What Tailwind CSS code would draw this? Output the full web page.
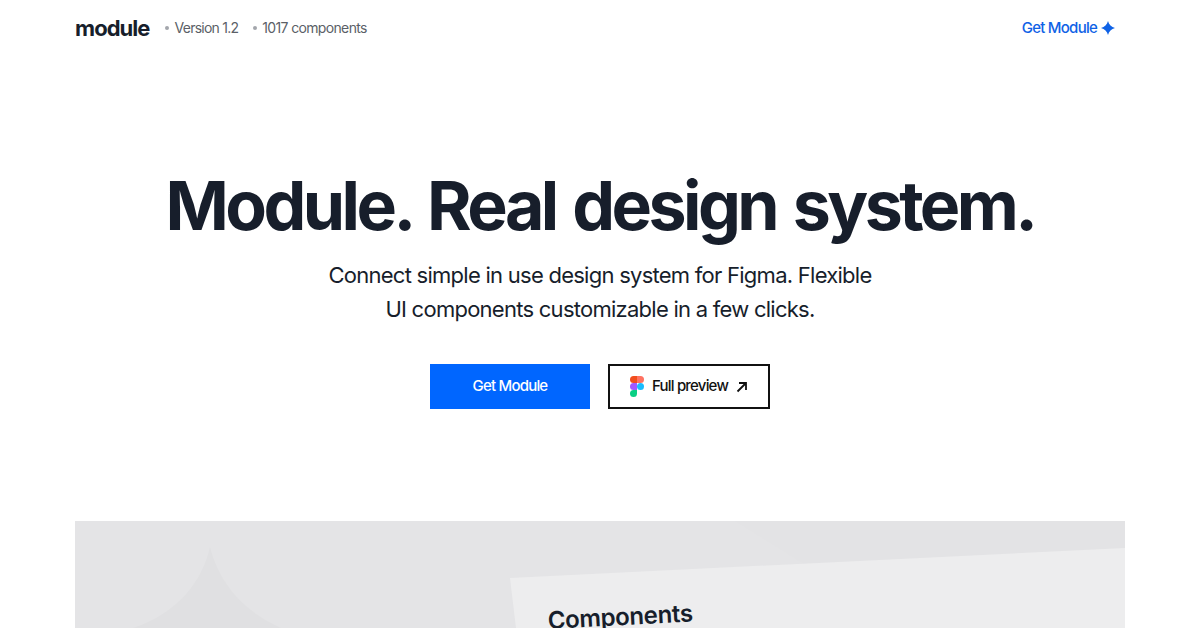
<!DOCTYPE html>
<html lang="en">
<head>
  <meta charset="UTF-8">
  <meta name="viewport" content="width=device-width, initial-scale=1.0">
  <title>Module</title>
  <script src="https://cdn.jsdelivr.net/npm/@tailwindcss/browser@4"></script>
</head>
<body class="bg-white font-['Inter',sans-serif] h-[628px] overflow-hidden">
  <header class="flex items-center justify-between h-[56px] pl-[75px] pr-[85px]">
    <div class="flex items-center">
      <span class="text-[22px] font-bold tracking-[-0.95px] text-[#171e2b]">module</span>
      <span class="w-[4px] h-[4px] rounded-full bg-[#a3a6ac] ml-[15px] mr-[6px]"></span>
      <span class="text-sm text-[#5b5f67] tracking-[-0.75px]">Version 1.2</span>
      <span class="w-[4px] h-[4px] rounded-full bg-[#a3a6ac] ml-[15px] mr-[5px]"></span>
      <span class="text-sm text-[#5b5f67] tracking-[-0.65px]">1017 components</span>
    </div>
    <a href="#" class="flex items-center gap-[4px] text-[15px] font-medium tracking-[-0.75px] text-[#0f62e6]">
      Get Module
      <svg width="14" height="14" viewBox="0 0 14 14" fill="#0f62e6"><path d="M7 0C7.9 3.6 10.4 6.1 14 7C10.4 7.9 7.9 10.4 7 14C6.1 10.4 3.6 7.9 0 7C3.6 6.1 6.1 3.6 7 0Z"/></svg>
    </a>
  </header>

  <main class="flex flex-col items-center">
    <h1 class="mt-[105px] text-[68px] leading-[88px] font-bold tracking-[-3.55px] [word-spacing:4px] text-[#171e2b] whitespace-nowrap">Module. Real design system.</h1>
    <p class="mt-[9px] text-[22px] leading-[34px] tracking-[-0.74px] text-center text-[#171e2b]">Connect simple in use design system for Figma. Flexible<br>UI components customizable in a few clicks.</p>
    <div class="flex gap-[18px] mt-[38px]">
      <a href="#" class="flex items-center justify-center w-[160px] h-[45px] bg-[#0066ff] text-white text-[15px] font-medium tracking-[-0.8px]">Get Module</a>
      <a href="#" class="flex items-center justify-center gap-[8px] w-[162px] h-[45px] border-2 border-[#111] text-[15px] font-medium tracking-[-0.8px] text-[#111]">
        <svg width="14" height="21" viewBox="0 0 14 21">
          <path fill="#f24e1e" d="M3.5 0H7V7H3.5a3.5 3.5 0 0 1 0-7Z"/>
          <path fill="#ff7262" d="M7 0h3.5a3.5 3.5 0 0 1 0 7H7Z"/>
          <path fill="#a259ff" d="M3.5 7H7v7H3.5a3.5 3.5 0 0 1 0-7Z"/>
          <circle fill="#1abcfe" cx="10.5" cy="10.5" r="3.5"/>
          <path fill="#0acf83" d="M3.5 14H7v3.5a3.5 3.5 0 1 1-3.5-3.5Z"/>
        </svg>
        Full preview
        <svg width="12" height="12" viewBox="0 0 12 12" fill="none" stroke="#111" stroke-width="1.8"><path d="M1.5 10.5L10 2M3 2H10V9"/></svg>
      </a>
    </div>

    <section class="relative mt-[112px] w-[1050px] h-[107px] bg-[#e4e4e6] overflow-hidden">
      <svg class="absolute inset-0" width="1050" height="107" viewBox="0 0 1050 107">
        <path fill="#e0e0e2" d="M135 26C128 58 104 92 58 107H206C168 90 144 62 135 26Z"/>
        <path fill="#e3e3e5" d="M660 0H1050V30L740 50Z"/>
        <path fill="#ededee" d="M435 57L1050 27V107H441Z"/>
      </svg>
      <h2 class="absolute left-[472px] top-[86px] text-[24px] leading-[28px] font-semibold tracking-[-0.35px] text-[#171e2b] -rotate-3 origin-top-left">Components</h2>
    </section>
  </main>
</body>
</html>
